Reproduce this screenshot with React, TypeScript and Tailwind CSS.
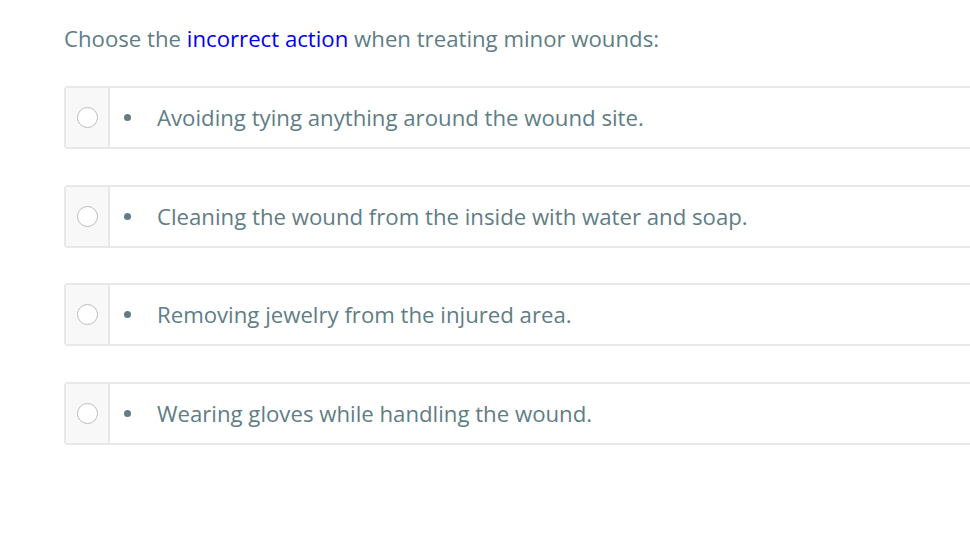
const options = [
  'Avoiding tying anything around the wound site.',
  'Cleaning the wound from the inside with water and soap.',
  'Removing jewelry from the injured area.',
  'Wearing gloves while handling the wound.',
]

export default function App() {
  return (
    <div className="min-h-screen bg-white pl-16 pt-[20px] font-['Open_Sans',sans-serif] text-[#607d85] overflow-hidden">
      <p className="text-[22.2px] leading-[38px]">
        Choose the <span className="text-[#0000ee]">incorrect action</span> when treating minor wounds:
      </p>

      <div className="mt-[28px] flex flex-col gap-[35.7px]">
        {options.map((text) => (
          <div
            key={text}
            className="flex h-[63px] w-[940px] overflow-hidden rounded-[4px] border-2 border-[#e8e8e8]"
          >
            <div className="flex w-[44px] shrink-0 items-center justify-center border-r-2 border-[#e8e8e8] bg-[#f8f8f8]">
              <span className="block h-[21px] w-[21px] rounded-full border border-[#bdbdbd] bg-white" />
            </div>
            <div className="flex items-center">
              <span className="ml-[14px] block h-[7px] w-[7px] rounded-full bg-[#607d85]" />
              <span className="ml-[26px] text-[22.2px]">{text}</span>
            </div>
          </div>
        ))}
      </div>
    </div>
  )
}
